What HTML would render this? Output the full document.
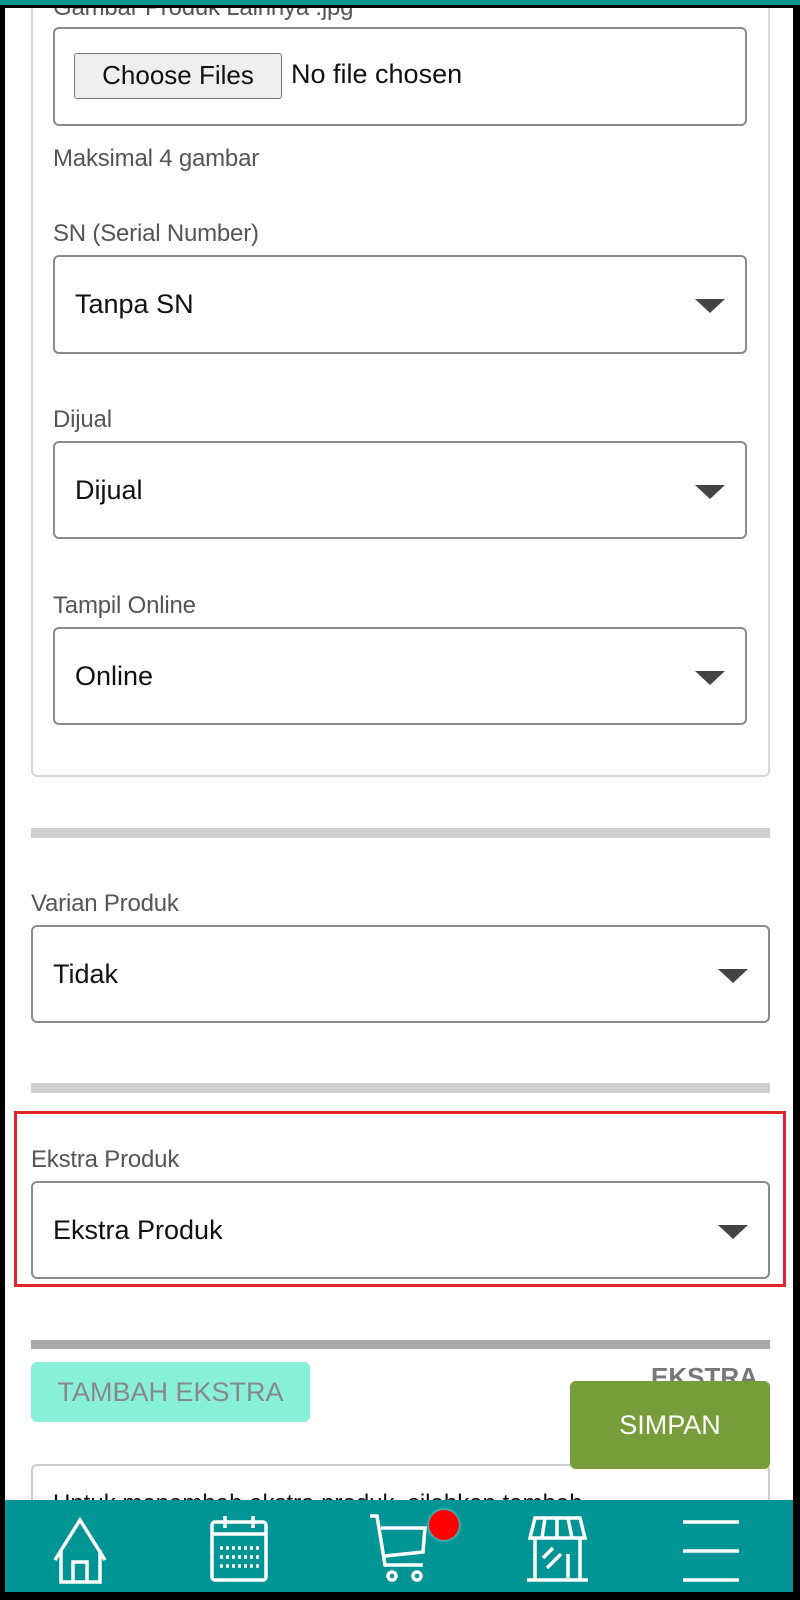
<!DOCTYPE html>
<html><head><meta charset="utf-8"><style>
*{box-sizing:border-box;margin:0;padding:0}
html,body{width:800px;height:1600px;overflow:hidden;background:#000;font-family:"Liberation Sans",sans-serif}
#page{position:absolute;left:5px;top:8px;width:788px;height:1584px;background:#fff;overflow:hidden}
.abs{position:absolute}
.card{left:26px;top:-20px;width:739px;height:789px;border:2px solid #d6d6d6;border-top:none;border-radius:0 0 6px 6px}
.lbl{position:absolute;font-size:24px;color:#555;letter-spacing:-0.2px}
.box{position:absolute;border:2px solid #8a8a8a;border-radius:6px;background:#fff}
.sel{font-size:27px;color:#111;padding-left:20px;display:flex;align-items:center}
.arr{position:absolute;right:20px;top:42px;width:0;height:0;border-left:15px solid transparent;border-right:15px solid transparent;border-top:14px solid #444}
.div{position:absolute;left:26px;width:739px;height:10px;background:#cfcfcf}
</style></head><body>
<div class="abs" style="left:0;top:0;width:800px;height:5px;background:#0a9494"></div>
<div id="page">
<div class="abs card"></div>
<div class="lbl" style="left:48px;top:-14px">Gambar Produk Lainnya .jpg</div>
<div class="box" style="left:48px;top:19px;width:694px;height:99px"></div>
<div class="abs" style="left:69px;top:45px;width:208px;height:46px;border:1.5px solid #777;border-radius:3px;background:#efefef;font-size:26px;color:#111;text-align:center;line-height:43px">Choose Files</div>
<div class="abs" style="left:286px;top:51px;font-size:27px;color:#111">No file chosen</div>
<div class="lbl" style="left:48px;top:137px">Maksimal 4 gambar</div>

<div class="lbl" style="left:48px;top:212px">SN (Serial Number)</div>
<div class="box sel" style="left:48px;top:247px;width:694px;height:99px">Tanpa SN<div class="arr"></div></div>
<div class="lbl" style="left:48px;top:398px">Dijual</div>
<div class="box sel" style="left:48px;top:433px;width:694px;height:98px">Dijual<div class="arr"></div></div>
<div class="lbl" style="left:48px;top:584px">Tampil Online</div>
<div class="box sel" style="left:48px;top:619px;width:694px;height:98px">Online<div class="arr"></div></div>

<div class="div" style="top:820px"></div>
<div class="lbl" style="left:26px;top:882px">Varian Produk</div>
<div class="box sel" style="left:26px;top:917px;width:739px;height:98px">Tidak<div class="arr"></div></div>
<div class="div" style="top:1075px"></div>

<div class="abs" style="left:9px;top:1103px;width:772px;height:176px;border:3px solid #e0242a"></div>
<div class="lbl" style="left:26px;top:1138px">Ekstra Produk</div>
<div class="box sel" style="left:26px;top:1173px;width:739px;height:98px">Ekstra Produk<div class="arr"></div></div>

<div class="div" style="top:1332px;height:9px;background:#a8a8a8"></div>
<div class="abs" style="left:26px;top:1354px;width:279px;height:60px;background:#88efd8;border-radius:6px;font-size:27px;color:#888;text-align:center;line-height:60px">TAMBAH EKSTRA</div>
<div class="abs" style="left:646px;top:1354px;font-size:26px;font-weight:bold;color:#777">EKSTRA</div>
<div class="box" style="left:26px;top:1456px;width:739px;height:120px;border-color:#ccc"></div>
<div class="abs" style="left:48px;top:1482px;font-size:24px;color:#111">Untuk menambah ekstra produk, silahkan tambah</div>
<div class="abs" style="left:565px;top:1373px;width:200px;height:88px;background:#769d39;border-radius:6px;font-size:27px;color:#fff;text-align:center;line-height:88px">SIMPAN</div>

<div class="abs" style="left:0;top:1492px;width:788px;height:92px;background:#009494">
<svg width="788" height="92" viewBox="0 0 788 92" fill="none" stroke="#fff" stroke-width="3.5">
<g transform="translate(0,-2)">
<path d="M50 62 L75 22 L100 62 M56 52 V84 H95 V52 M68 84 V64 H82 V84"/>
<rect x="207" y="24" width="54" height="58" rx="3"/><line x1="207" y1="36" x2="261" y2="36"/><line x1="220" y1="18" x2="220" y2="30"/><line x1="248" y1="18" x2="248" y2="30"/>
<g stroke-width="3.5" stroke-dasharray="3 3"><line x1="215" y1="50" x2="255" y2="50"/><line x1="215" y1="59" x2="255" y2="59"/><line x1="215" y1="68" x2="255" y2="68"/></g>
<path d="M365 18 H372 L380 67 H418 M376 30 H420 L418 54 L380 58"/><circle cx="387" cy="78" r="4"/><circle cx="412" cy="78" r="4"/>
<path d="M530 20 H575 L580 40 H525 Z M530 40 V82 H575 V40 M522 82 H583 M540 20 L537 40 M552 20 V40 M563 20 L567 40 M538 60 L548 50 M542 70 L556 56 M563 56 V80"/>
<line x1="678" y1="24" x2="734" y2="24"/><line x1="678" y1="53" x2="734" y2="53"/><line x1="678" y1="82" x2="734" y2="82"/>
</g></svg>
</div>
<div class="abs" style="left:424px;top:1502px;width:30px;height:30px;border-radius:50%;background:#f00;box-shadow:0 0 4px rgba(255,255,255,.7)"></div>
</div>
</body></html>
